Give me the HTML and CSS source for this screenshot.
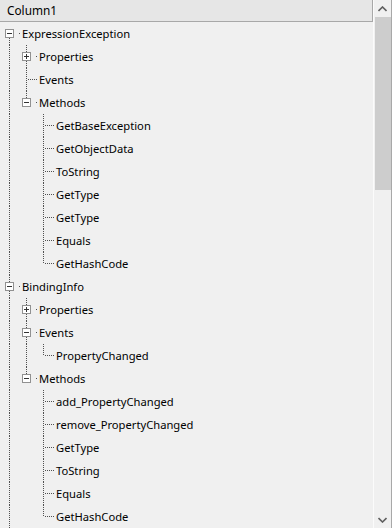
FILE: index.html
```html
<!DOCTYPE html>
<html lang="en">
<head>
    <meta charset="UTF-8">
    <title>Column1</title>
    <link rel="stylesheet" href="styles.css">
</head>
<body>
    <div class="frame">
        <div class="tree">
            <div class="header">Column1</div>
            <div class="rows">
                <div class="row"><span class="cell exp minus down"></span><span class="label">ExpressionException</span></div>
                <div class="row"><span class="cell pipe"></span><span class="cell exp plus up down"></span><span class="label">Properties</span></div>
                <div class="row"><span class="cell pipe"></span><span class="cell tee"></span><span class="label">Events</span></div>
                <div class="row"><span class="cell pipe"></span><span class="cell exp minus up"></span><span class="label">Methods</span></div>
                <div class="row"><span class="cell pipe"></span><span class="cell"></span><span class="cell tee"></span><span class="label">GetBaseException</span></div>
                <div class="row"><span class="cell pipe"></span><span class="cell"></span><span class="cell tee"></span><span class="label">GetObjectData</span></div>
                <div class="row"><span class="cell pipe"></span><span class="cell"></span><span class="cell tee"></span><span class="label">ToString</span></div>
                <div class="row"><span class="cell pipe"></span><span class="cell"></span><span class="cell tee"></span><span class="label">GetType</span></div>
                <div class="row"><span class="cell pipe"></span><span class="cell"></span><span class="cell tee"></span><span class="label">GetType</span></div>
                <div class="row"><span class="cell pipe"></span><span class="cell"></span><span class="cell tee"></span><span class="label">Equals</span></div>
                <div class="row"><span class="cell pipe"></span><span class="cell"></span><span class="cell elbow"></span><span class="label">GetHashCode</span></div>
                <div class="row"><span class="cell exp minus up down"></span><span class="label">BindingInfo</span></div>
                <div class="row"><span class="cell pipe"></span><span class="cell exp plus up down"></span><span class="label">Properties</span></div>
                <div class="row"><span class="cell pipe"></span><span class="cell exp minus up down"></span><span class="label">Events</span></div>
                <div class="row"><span class="cell pipe"></span><span class="cell pipe"></span><span class="cell elbow"></span><span class="label">PropertyChanged</span></div>
                <div class="row"><span class="cell pipe"></span><span class="cell exp minus up"></span><span class="label">Methods</span></div>
                <div class="row"><span class="cell pipe"></span><span class="cell"></span><span class="cell tee"></span><span class="label">add_PropertyChanged</span></div>
                <div class="row"><span class="cell pipe"></span><span class="cell"></span><span class="cell tee"></span><span class="label">remove_PropertyChanged</span></div>
                <div class="row"><span class="cell pipe"></span><span class="cell"></span><span class="cell tee"></span><span class="label">GetType</span></div>
                <div class="row"><span class="cell pipe"></span><span class="cell"></span><span class="cell tee"></span><span class="label">ToString</span></div>
                <div class="row"><span class="cell pipe"></span><span class="cell"></span><span class="cell tee"></span><span class="label">Equals</span></div>
                <div class="row"><span class="cell pipe"></span><span class="cell"></span><span class="cell elbow"></span><span class="label">GetHashCode</span></div>
            </div>
        </div>
        <div class="scrollbar">
            <div class="arrow">
                <svg width="9" height="6" viewBox="0 0 9 6"><path d="M0.5 5 L4.5 1 L8.5 5" fill="none" stroke="#606060" stroke-width="1.6"/></svg>
            </div>
            <div class="thumb"></div>
            <div class="track"></div>
            <div class="arrow">
                <svg width="9" height="6" viewBox="0 0 9 6"><path d="M0.5 1 L4.5 5 L8.5 1" fill="none" stroke="#606060" stroke-width="1.6"/></svg>
            </div>
        </div>
    </div>
</body>
</html>
```

FILE: styles.css
```css
:root {
    --line: #505050;
    --bg: #f0f0f0;
}

* {
    box-sizing: border-box;
    margin: 0;
    padding: 0;
}

body {
    width: 392px;
    height: 528px;
    overflow: hidden;
    background: var(--bg);
    font-family: 'Noto Sans', 'Open Sans', sans-serif;
    font-size: 11.2px;
    color: #000;
}

.frame {
    display: flex;
    height: 528px;
}

.tree {
    flex: 1;
    overflow: hidden;
    border-right: 1px solid #fbfbfb;
}

.header {
    height: 22px;
    padding: 2px 0 0 7px;
    background: #e6e6e6;
    border-bottom: 1px solid #a8a8a8;
    border-right: 1px solid #a8a8a8;
    font-size: 11.8px;
    line-height: 17px;
}

.rows {
    padding-left: 1px;
}

.row {
    display: flex;
    height: 23px;
    align-items: center;
}

.label {
    padding-left: 4px;
    white-space: nowrap;
    line-height: 23px;
}

/* tree guide cells */
.cell {
    position: relative;
    width: 17px;
    height: 23px;
    flex: none;
}

.pipe::before,
.tee::before,
.elbow::before,
.exp.up::before,
.exp.down::after {
    content: '';
    position: absolute;
    left: 8px;
    width: 1px;
    background: repeating-linear-gradient(to bottom, var(--line) 0 1px, transparent 1px 2px);
}

.pipe::before,
.tee::before {
    top: 0;
    height: 23px;
}

.elbow::before {
    top: 0;
    height: 12px;
}

.exp.up::before {
    top: 0;
    height: 7px;
}

.exp.down::after {
    top: 16px;
    height: 7px;
}

.tee::after,
.elbow::after {
    content: '';
    position: absolute;
    top: 11px;
    left: 10px;
    width: 9px;
    height: 1px;
    background: repeating-linear-gradient(to right, var(--line) 0 1px, transparent 1px 2px);
}

/* expander box */
.exp.minus {
    background:
        linear-gradient(#333, #333) no-repeat 6px 11px / 5px 1px,
        linear-gradient(#fff, #fff) no-repeat 5px 8px / 7px 7px,
        linear-gradient(#919191, #919191) no-repeat 4px 7px / 9px 9px;
}

.exp.plus {
    background:
        linear-gradient(#333, #333) no-repeat 6px 11px / 5px 1px,
        linear-gradient(#333, #333) no-repeat 8px 9px / 1px 5px,
        linear-gradient(#fff, #fff) no-repeat 5px 8px / 7px 7px,
        linear-gradient(#919191, #919191) no-repeat 4px 7px / 9px 9px;
}

.exp + .label {
    background: repeating-linear-gradient(to right, var(--line) 0 1px, transparent 1px 2px) no-repeat -3px 11px / 5px 1px;
}

/* scrollbar */
.scrollbar {
    width: 18px;
    display: flex;
    flex-direction: column;
    background: var(--bg);
    border-right: 1px solid #a8a8a8;
}

.arrow {
    height: 17px;
    display: flex;
    align-items: center;
    justify-content: center;
}

.thumb {
    height: 173px;
    margin: 0 0 0 1px;
    background: #cdcdcd;
}

.track {
    flex: 1;
}
```
